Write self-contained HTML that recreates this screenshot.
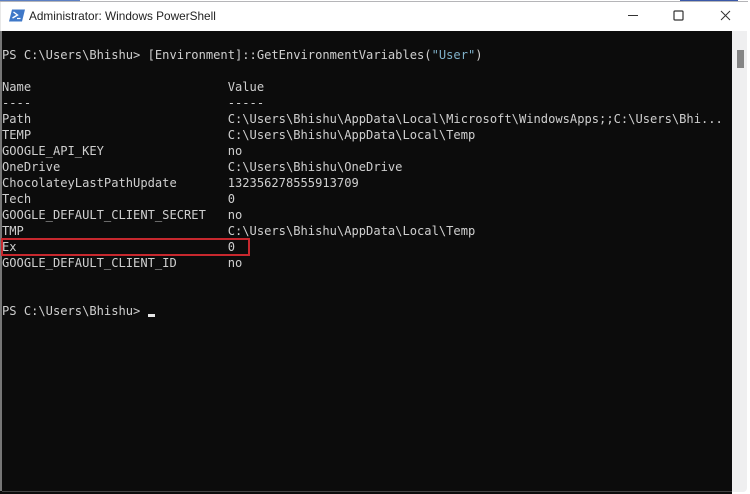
<!DOCTYPE html>
<html><head><meta charset="utf-8"><style>
html,body{margin:0;padding:0;background:#fff}
#w{position:relative;width:750px;height:494px;overflow:hidden;background:#fff}
.a{position:absolute}
#txt{position:absolute;left:0;top:0;width:732px;height:494px;filter:blur(.25px)}
.t{position:absolute;left:2px;font:12.1px/16px "DejaVu Sans Mono",monospace;letter-spacing:0;color:#cfcfcf;white-space:pre;height:16px}
</style></head><body><div id="w">
<div class="a" style="left:0;top:0;width:80px;height:2px;background:#5b7fc4"></div>
<div class="a" style="left:680px;top:0;width:58px;height:2px;background:#3a58a8"></div>
<div class="a" style="left:0;top:1px;width:748px;height:1px;background:#b5b5b8"></div>
<div class="a" style="left:1px;top:2px;width:746px;height:29px;background:#fff;border-top-right-radius:6px"></div>
<div class="a" style="left:0;top:2px;width:1px;height:488px;background:#e8e8e8"></div>
<svg class="a" style="left:9px;top:9px" width="16" height="13" viewBox="0 0 16 13"><path d="M3 0.5H16L13 12.5H0Z" fill="#3f78c8"/><path d="M4.5 3L8.5 6L3.5 9" stroke="#fff" stroke-width="1.4" fill="none"/><path d="M8 9.5H11.5" stroke="#fff" stroke-width="1.2"/></svg>
<div class="a" style="left:29px;top:9px;font:11.8px/15px 'Liberation Sans',sans-serif;color:#222;white-space:pre">Administrator: Windows PowerShell</div>
<svg class="a" style="left:620px;top:5px" width="130" height="22"><path d="M8 10.5H18" stroke="#333" stroke-width="1"/><rect x="54" y="6" width="9" height="9" rx="1" fill="none" stroke="#333" stroke-width="1.2"/><path d="M101 6L110 15M110 6L101 15" stroke="#333" stroke-width="1"/></svg>
<div class="a" style="left:0;top:31px;width:2px;height:463px;background:#777"></div>
<div class="a" style="left:2px;top:31px;width:730px;height:463px;background:#0c0c0c"></div>
<div class="a" style="left:0;top:491px;width:732px;height:3px;background:#0c0c0c"></div>
<div class="a" style="left:2px;top:491px;width:730px;height:1px;background:#444"></div>
<div class="a" style="left:732px;top:31px;width:15px;height:461px;background:#efeff0;border-bottom-right-radius:4px"></div>
<div class="a" style="left:737px;top:50px;width:7px;height:18px;background:#858585"></div>
<div id="txt">
<div class="t" style="top:47px">PS C:\Users\Bhishu&gt; [Environment]::GetEnvironmentVariables(<span style="color:#7fb0c8">"User"</span>)</div>
<div class="t" style="top:79px">Name                           Value</div>
<div class="t" style="top:95px">----                           -----</div>
<div class="t" style="top:111px">Path                           C:\Users\Bhishu\AppData\Local\Microsoft\WindowsApps;;C:\Users\Bhi...</div>
<div class="t" style="top:127px">TEMP                           C:\Users\Bhishu\AppData\Local\Temp</div>
<div class="t" style="top:143px">GOOGLE_API_KEY                 no</div>
<div class="t" style="top:159px">OneDrive                       C:\Users\Bhishu\OneDrive</div>
<div class="t" style="top:175px">ChocolateyLastPathUpdate       132356278555913709</div>
<div class="t" style="top:191px">Tech                           0</div>
<div class="t" style="top:207px">GOOGLE_DEFAULT_CLIENT_SECRET   no</div>
<div class="t" style="top:223px">TMP                            C:\Users\Bhishu\AppData\Local\Temp</div>
<div class="t" style="top:239px">Ex                             0</div>
<div class="t" style="top:255px">GOOGLE_DEFAULT_CLIENT_ID       no</div>
<div class="t" style="top:303px">PS C:\Users\Bhishu&gt;</div>
</div>
<div class="a" style="left:148px;top:314px;width:7px;height:3px;background:#e6e6e6"></div>
<div class="a" style="left:1px;top:238px;width:245px;height:14px;border:2px solid #c8282e"></div>
</div></body></html>
